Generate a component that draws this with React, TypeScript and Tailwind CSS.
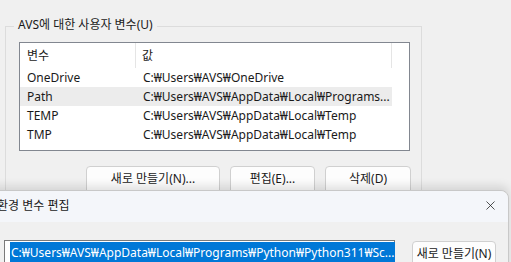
import { X } from 'lucide-react';

const FONT = "font-['Noto_Sans','Noto_Sans_CJK_KR',sans-serif]";

const ROWS = [
  { name: 'OneDrive', value: 'C:₩Users₩AVS₩OneDrive', selected: false },
  { name: 'Path', value: 'C:₩Users₩AVS₩AppData₩Local₩Programs...', selected: true },
  { name: 'TEMP', value: 'C:₩Users₩AVS₩AppData₩Local₩Temp', selected: false },
  { name: 'TMP', value: 'C:₩Users₩AVS₩AppData₩Local₩Temp', selected: false },
];

function WinButton({ label, className }: { label: string; className: string }) {
  return (
    <div
      className={`flex h-[30px] items-start justify-center rounded-[4px] border border-[#d0d0d0] bg-[#fdfdfd] pt-[3px] text-[12px] text-[#1a1a1a] ${className}`}
    >
      {label}
    </div>
  );
}

export default function App() {
  return (
    <div className={`relative h-[262px] w-[511px] overflow-hidden bg-[#f0f0f0] ${FONT}`}>
      {/* group box */}
      <div className="ml-[5px] mt-[26px] h-[260px] w-[417px] border border-[#dcdcdc] pl-[13px] pt-[16px]">
        <div className="-mt-[28px] mb-[7px] ml-[-5px] w-fit bg-[#f0f0f0] px-[4px] text-[12px] leading-[20px] text-[#1a1a1a]">
          AVS에 대한 사용자 변수(U)
        </div>
        {/* list view */}
        <div className="h-[109px] w-[391px] border border-[#828790] bg-white text-[12px] text-[#1a1a1a]">
          <div className="flex h-[25px] items-center">
            <div className="flex h-full w-[116px] items-center border-r border-[#e5e5e5] pl-[7px]">변수</div>
            <div className="flex h-full w-[256px] items-center border-r border-[#e5e5e5] pl-[6px]">값</div>
          </div>
          {ROWS.map((r) => (
            <div
              key={r.name}
              className={`flex h-[19px] w-[372px] items-center whitespace-nowrap ${r.selected ? 'bg-[#ececec]' : ''}`}
            >
              <div className="w-[116px] pl-[7px]">{r.name}</div>
              <div className="pl-[7px]">{r.value}</div>
            </div>
          ))}
        </div>
        <div className="mt-[15px] flex gap-[10px] pl-[67px]">
          <WinButton label="새로 만들기(N)..." className="w-[134px]" />
          <WinButton label="편집(E)..." className="w-[85px]" />
          <WinButton label="삭제(D)" className="w-[86px]" />
        </div>
      </div>

      {/* edit dialog window */}
      <div className="absolute left-[-12px] top-[190px] h-[90px] w-[521px] rounded-tr-[8px] border border-[#c8c8c8] bg-[#f0f0f0] shadow-[0_-4px_10px_rgba(0,0,0,0.12)]">
        <div className="flex h-[31px] items-center justify-between rounded-tr-[8px] bg-[#f4f6fa] pb-[2px] pl-[8px] pr-[10px] text-[12px] text-[#1a1a1a]">
          <span>환경 변수 편집</span>
          <X size={15} strokeWidth={1.2} className="text-[#1a1a1a]" />
        </div>
        <div className="flex items-start pl-[15px] pt-[18px]">
          <div className="h-[30px] w-[391px] border border-[#7a7a7a] bg-white p-[1px] pl-[5px]">
            <div className="w-fit whitespace-nowrap bg-[#0078d7] px-[1px] text-[12px] leading-[21px] text-white">
              C:₩Users₩AVS₩AppData₩Local₩Programs₩Python₩Python311₩Sc...
            </div>
          </div>
          <div className="ml-[17px] mt-[1px] flex h-[30px] w-[84px] items-start justify-center rounded-[4px] border border-[#d0d0d0] bg-[#fdfdfd] pt-[3px] text-[12px] text-[#1a1a1a]">
            새로 만들기(N)
          </div>
        </div>
      </div>
    </div>
  );
}
